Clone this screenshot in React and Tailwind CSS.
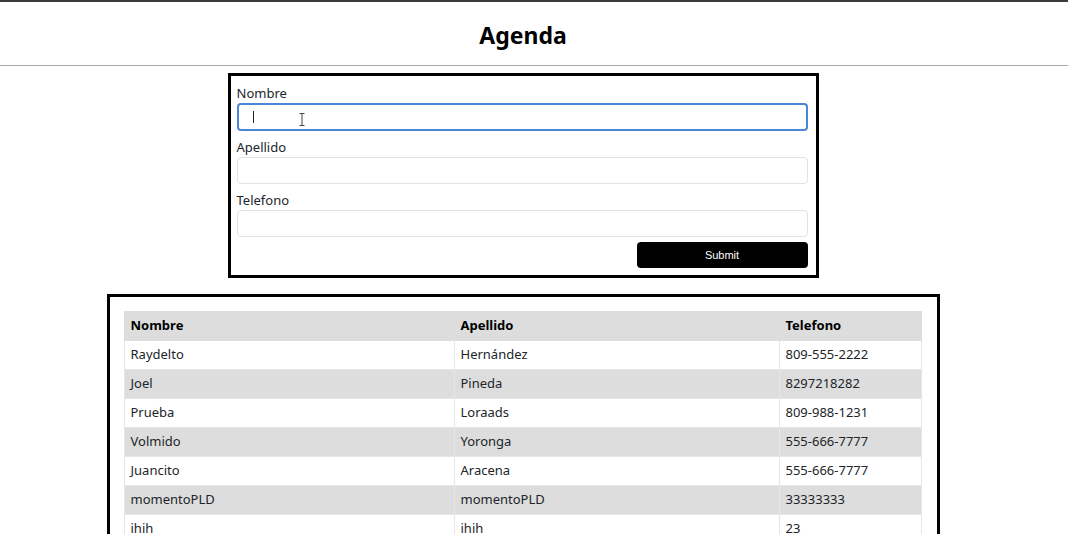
import React from "react";

const contacts = [
  { nombre: "Raydelto", apellido: "Hernández", telefono: "809-555-2222" },
  { nombre: "Joel", apellido: "Pineda", telefono: "8297218282" },
  { nombre: "Prueba", apellido: "Loraads", telefono: "809-988-1231" },
  { nombre: "Volmido", apellido: "Yoronga", telefono: "555-666-7777" },
  { nombre: "Juancito", apellido: "Aracena", telefono: "555-666-7777" },
  { nombre: "momentoPLD", apellido: "momentoPLD", telefono: "33333333" },
  { nombre: "ihih", apellido: "ihih", telefono: "23" },
  { nombre: "Carlos", apellido: "Mejía", telefono: "809-111-2233" },
];

const Field = ({ label, focused }) => (
  <div>
    <label className="block text-[13px] leading-[19px] text-[#212529]">
      {label}
    </label>
    <div className="relative">
      <input
        type="text"
        className={
          focused
            ? "block w-full h-[28px] rounded-[4px] border-2 border-[#4a86d8] bg-white outline-none"
            : "block w-full h-[27px] rounded-[4px] border border-[#e2e2e2] bg-white outline-none"
        }
      />
      {focused && (
        <>
          {/* text caret */}
          <span className="absolute left-[16px] top-[8px] w-px h-[12px] bg-[#222]" />
          {/* mouse I-beam */}
          <svg
            className="absolute left-[62px] top-[10px]"
            width="6"
            height="13"
            viewBox="0 0 6 13"
          >
            <path d="M0.5 0.5h5M3 0.5v12M0.5 12.5h5" stroke="#444" strokeWidth="1" fill="none" />
          </svg>
        </>
      )}
    </div>
  </div>
);

export default function App() {
  return (
    <div className="min-h-screen bg-white" style={{ fontFamily: '"Noto Sans", "Open Sans", sans-serif' }}>
      <div className="h-[2px] bg-[#3c3c3c]" />
      <header className="h-[64px] border-b border-[#a8a8a8] flex items-center justify-center pr-[22px]">
        <h1 className="text-[23px] font-bold text-black pt-[4px]">Agenda</h1>
      </header>

      <div className="pr-[22px] flex flex-col items-center">
        <form className="mt-[7px] w-[591px] border-[3px] border-black pl-[6px] pr-[8px] pt-[8px] pb-[7px]">
          <div className="flex flex-col gap-[7px]">
            <Field label="Nombre" focused />
            <Field label="Apellido" />
            <Field label="Telefono" />
          </div>
          <div className="flex justify-end mt-[5px]">
            <button
              type="button"
              className="w-[171px] h-[26px] rounded-[4px] bg-black text-white text-[11px]"
              style={{ fontFamily: '"Liberation Sans", Arial, sans-serif' }}
            >
              Submit
            </button>
          </div>
        </form>

        <div className="mt-[16px] w-[833px] border-[3px] border-black pl-[14px] pr-[15px] pt-[14px] pb-[20px]">
          <table className="w-full table-fixed border-collapse text-[13px] text-[#212529]">
            <colgroup>
              <col className="w-[330px]" />
              <col className="w-[325px]" />
              <col />
            </colgroup>
            <thead>
              <tr className="bg-[#dddddd]">
                <th className="h-[29px] px-[6px] py-0 text-left font-bold text-black border border-[#dddddd]">Nombre</th>
                <th className="h-[29px] px-[6px] py-0 text-left font-bold text-black border border-[#dddddd]">Apellido</th>
                <th className="h-[29px] px-[6px] py-0 text-left font-bold text-black border border-[#dddddd]">Telefono</th>
              </tr>
            </thead>
            <tbody>
              {contacts.map((c, i) => (
                <tr key={i} className={i % 2 === 0 ? "bg-white" : "bg-[#dddddd]"}>
                  <td className="h-[29px] px-[6px] py-0 border border-[#e6e6e6]">{c.nombre}</td>
                  <td className="h-[29px] px-[6px] py-0 border border-[#e6e6e6]">{c.apellido}</td>
                  <td className="h-[29px] px-[6px] py-0 border border-[#e6e6e6]">{c.telefono}</td>
                </tr>
              ))}
            </tbody>
          </table>
        </div>
      </div>
    </div>
  );
}
